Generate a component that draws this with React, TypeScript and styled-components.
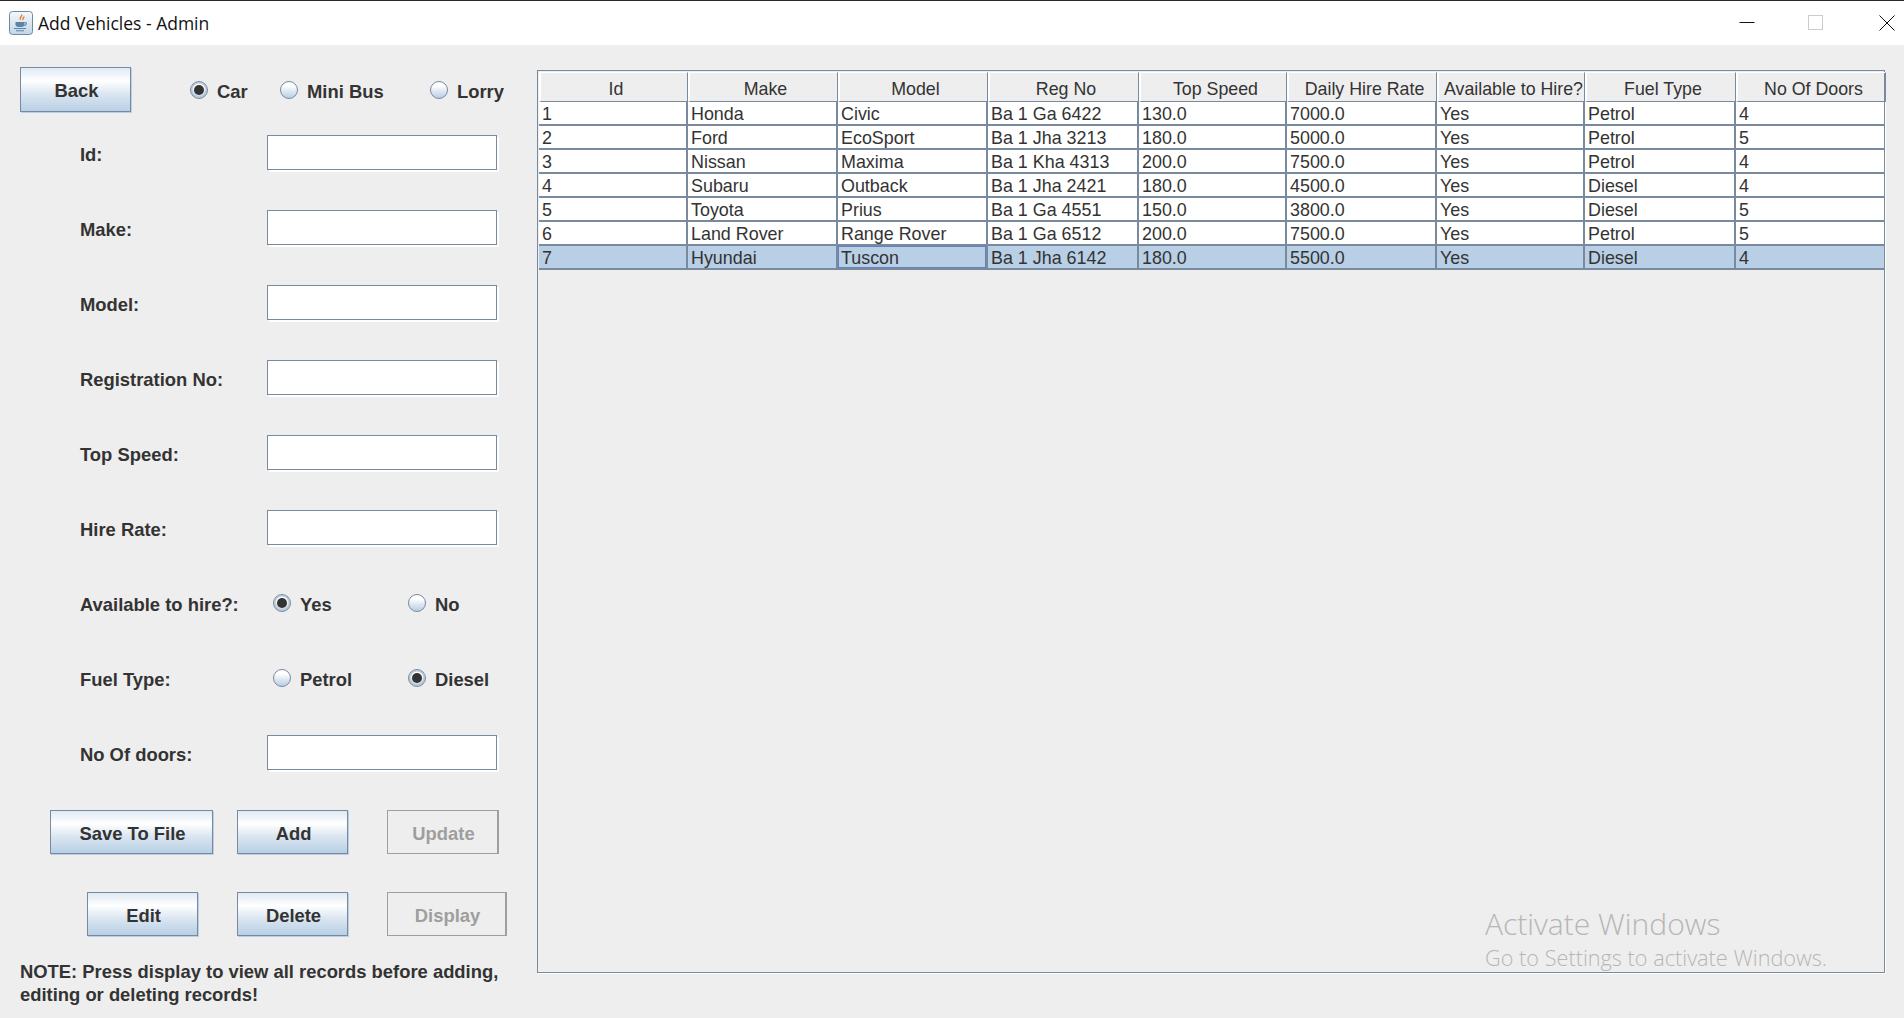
import React from "react";
import styled, { createGlobalStyle } from "styled-components";

const Global = createGlobalStyle`
  html, body { margin: 0; padding: 0; background: #eeeeee; }
  * { box-sizing: border-box; }
`;

const Window = styled.div`
  width: 1904px;
  height: 1018px;
  display: flex;
  flex-direction: column;
  background: #eeeeee;
  overflow: hidden;
  font-family: "Liberation Sans", Arial, sans-serif;
  color: #333333;
`;

const TitleBar = styled.header`
  height: 45px;
  flex: none;
  display: flex;
  align-items: center;
  background: #ffffff;
  border-top: 1px solid #2b2b2b;
  padding-left: 9px;
`;

const AppIcon = styled.svg`
  width: 24px;
  height: 24px;
  flex: none;
`;

const Title = styled.h1`
  margin: 0 0 0 5px;
  font: 400 17.5px "Open Sans", sans-serif;
  color: #111111;
  flex: 1;
`;

const WinButton = styled.svg<{ $gap: number }>`
  width: 16px;
  height: 16px;
  flex: none;
  margin-right: ${(p) => p.$gap}px;
`;

const Body = styled.main`
  flex: 1;
  display: flex;
  min-height: 0;
`;

const Side = styled.section`
  width: 537px;
  flex: none;
  display: flex;
  flex-direction: column;
  padding-top: 22px;
  font-weight: 700;
  font-size: 18.4px;
`;

const TopRow = styled.div`
  display: flex;
  align-items: center;
  height: 45px;
  padding-left: 20px;
`;

const Btn = styled.button<{ $w: number; $h?: number }>`
  width: ${(p) => p.$w}px;
  height: ${(p) => p.$h ?? 44}px;
  flex: none;
  padding: 3px 0 0 2px;
  border: 1px solid #7a8a9e;
  box-shadow: 1px 1px 0 #b8cfe5;
  background: linear-gradient(#dfe9f4 0%, #ffffff 30%, #dbe6f1 60%, #b8cfe5 100%);
  font: 700 18.4px "Liberation Sans", Arial, sans-serif;
  color: #333333;
  &:disabled {
    background: transparent;
    border-color: #9e9e9e;
    box-shadow: 1px 0 0 #9e9e9e;
    color: #9e9e9e;
  }
`;

const Form = styled.div`
  display: flex;
  flex-direction: column;
  gap: 40px;
  margin-top: 23px;
  padding-left: 80px;
`;

const FormRow = styled.div`
  display: flex;
  align-items: center;
  height: 35px;
`;

const Label = styled.label`
  width: 187px;
  flex: none;
  padding-top: 4px;
`;

const Field = styled.input`
  width: 230px;
  height: 35px;
  padding: 0;
  border: 1px solid #7a8a9e;
  background: #ffffff;
  box-shadow: 2px 2px 0 #ffffff;
  outline: none;
`;

const RadioOption = styled.span<{ $w: number; $ml?: number }>`
  display: inline-flex;
  align-items: center;
  gap: 9px;
  width: ${(p) => p.$w}px;
  margin-left: ${(p) => p.$ml ?? 0}px;
  flex: none;
`;

const RadioText = styled.span`
  padding-top: 4px;
`;

const RadioMark = styled.i<{ $on?: boolean }>`
  position: relative;
  display: block;
  width: 18px;
  height: 18px;
  flex: none;
  border-radius: 50%;
  border: 1px solid #7a8a9e;
  background: linear-gradient(#ffffff 25%, #dbe6f1 60%, #b8cfe5 100%);
  box-shadow: ${(p) => (p.$on ? "inset 0 0 0 1.5px #b8c8d8" : "none")};
  &::after {
    content: "";
    display: ${(p) => (p.$on ? "block" : "none")};
    position: absolute;
    left: 3px;
    top: 3px;
    width: 10px;
    height: 10px;
    border-radius: 50%;
    background: #333333;
  }
`;

const Actions = styled.div<{ $pl: number; $mt: number }>`
  display: flex;
  padding-left: ${(p) => p.$pl}px;
  margin-top: ${(p) => p.$mt}px;
`;

const ActionSlot = styled.span<{ $ml?: number }>`
  margin-left: ${(p) => p.$ml ?? 0}px;
  display: flex;
`;

const Note = styled.p`
  margin: 24px 0 0 20px;
  line-height: 23px;
  width: 500px;
`;

const TablePanel = styled.section`
  position: relative;
  width: 1348px;
  height: 903px;
  margin-top: 25px;
  border: 1px solid #7a8a9e;
  box-shadow: 1px 1px 0 #ffffff;
  padding: 1px 0 0 1px;
`;

const COLS = "149px 150px 150px 151px 148px 150px 148px 151px 150px";

const HeaderRow = styled.div`
  display: grid;
  grid-template-columns: ${COLS};
  height: 30px;
`;

const HeaderCell = styled.div`
  display: flex;
  align-items: center;
  justify-content: center;
  padding: 4px 0 0 4px;
  border-top: 1px solid #ffffff;
  border-left: 2px solid #ffffff;
  border-right: 1px solid #7a8a9e;
  border-bottom: 1px solid #7a8a9e;
  font-size: 17.8px;
  white-space: nowrap;
  overflow: hidden;
`;

const DataRow = styled.div<{ $sel?: boolean }>`
  display: grid;
  grid-template-columns: ${COLS};
  height: 24px;
  background: ${(p) => (p.$sel ? "#b8cfe5" : "#ffffff")};
  border-bottom: 2px solid #7a8a9e;
`;

const Cell = styled.div<{ $focus?: boolean }>`
  display: flex;
  align-items: center;
  padding: 3px 0 0 3px;
  border-right: 2px solid #7a8a9e;
  font-size: 17.9px;
  white-space: nowrap;
  overflow: hidden;
  box-shadow: ${(p) => (p.$focus ? "inset 0 0 0 1px #6382bf" : "none")};
  &:last-child { border-right: none; }
`;

const Watermark = styled.div`
  position: absolute;
  left: 947px;
  bottom: 0;
  font-family: "Open Sans", sans-serif;
  font-weight: 300;
  color: #b6b6b6;
  pointer-events: none;
`;

const WatermarkTitle = styled.div`
  font-size: 30px;
  line-height: 40px;
  white-space: nowrap;
`;

const WatermarkSub = styled.div`
  font-size: 21.7px;
  line-height: 28px;
  white-space: nowrap;
`;

const heads = ["Id", "Make", "Model", "Reg No", "Top Speed", "Daily Hire Rate", "Available to Hire?", "Fuel Type", "No Of Doors"];
const rows = [
  ["1", "Honda", "Civic", "Ba 1 Ga 6422", "130.0", "7000.0", "Yes", "Petrol", "4"],
  ["2", "Ford", "EcoSport", "Ba 1 Jha 3213", "180.0", "5000.0", "Yes", "Petrol", "5"],
  ["3", "Nissan", "Maxima", "Ba 1 Kha 4313", "200.0", "7500.0", "Yes", "Petrol", "4"],
  ["4", "Subaru", "Outback", "Ba 1 Jha 2421", "180.0", "4500.0", "Yes", "Diesel", "4"],
  ["5", "Toyota", "Prius", "Ba 1 Ga 4551", "150.0", "3800.0", "Yes", "Diesel", "5"],
  ["6", "Land Rover", "Range Rover", "Ba 1 Ga 6512", "200.0", "7500.0", "Yes", "Petrol", "5"],
  ["7", "Hyundai", "Tuscon", "Ba 1 Jha 6142", "180.0", "5500.0", "Yes", "Diesel", "4"],
];
const fields = ["Id:", "Make:", "Model:", "Registration No:", "Top Speed:", "Hire Rate:"];

const Radio = ({ text, on, w, ml }: { text: string; on?: boolean; w: number; ml?: number }) => (
  <RadioOption $w={w} $ml={ml}>
    <RadioMark $on={on} />
    <RadioText>{text}</RadioText>
  </RadioOption>
);

export default function App() {
  return (
    <Window>
      <Global />
      <TitleBar>
        <AppIcon viewBox="0 0 24 24">
          <defs>
            <linearGradient id="ic" x1="0" y1="0" x2="0" y2="1">
              <stop offset="0" stopColor="#f4f8fb" />
              <stop offset="1" stopColor="#c3d6e6" />
            </linearGradient>
          </defs>
          <rect x="0.5" y="0.5" width="23" height="23" rx="3" fill="url(#ic)" stroke="#6d8aa3" />
          <path d="M12.5 3.5c1.5 1.6-2.6 3 -1.2 5.4M14.8 5.5c.6 1.2-1.6 2-1 3.6" fill="none" stroke="#e8792b" strokeWidth="1.4" />
          <path d="M6.5 11h9v2.6c0 1.5-1.2 2.4-2.6 2.4H9.1c-1.4 0-2.6-.9-2.6-2.4z" fill="#5b84a8" />
          <path d="M15.5 11.5c2.6-.4 2.6 2.6-.3 3M5 17.5h12M7 19.8h8" fill="none" stroke="#5b84a8" strokeWidth="1.1" />
        </AppIcon>
        <Title>Add Vehicles - Admin</Title>
        <WinButton $gap={53} viewBox="0 0 16 16">
          <path d="M0.5 7.5H15.5" stroke="#111" strokeWidth="1" />
        </WinButton>
        <WinButton $gap={55} viewBox="0 0 16 16">
          <rect x="0.5" y="0.5" width="14" height="14" fill="none" stroke="#cccccc" />
        </WinButton>
        <WinButton $gap={9} viewBox="0 0 16 16">
          <path d="M0.5 0.5L15.5 15.5M15.5 0.5L0.5 15.5" stroke="#111" strokeWidth="1" />
        </WinButton>
      </TitleBar>
      <Body>
        <Side>
          <TopRow>
            <Btn $w={111} $h={45}>Back</Btn>
            <Radio text="Car" on w={90} ml={59} />
            <Radio text="Mini Bus" w={150} />
            <Radio text="Lorry" w={90} />
          </TopRow>
          <Form>
            {fields.map((f) => (
              <FormRow key={f}>
                <Label>{f}</Label>
                <Field />
              </FormRow>
            ))}
            <FormRow>
              <Label>Available to hire?:</Label>
              <Radio text="Yes" on w={135} ml={6} />
              <Radio text="No" w={80} />
            </FormRow>
            <FormRow>
              <Label>Fuel Type:</Label>
              <Radio text="Petrol" w={135} ml={6} />
              <Radio text="Diesel" on w={90} />
            </FormRow>
            <FormRow>
              <Label>No Of doors:</Label>
              <Field />
            </FormRow>
          </Form>
          <Actions $pl={50} $mt={40}>
            <Btn $w={163}>Save To File</Btn>
            <ActionSlot $ml={24}><Btn $w={111}>Add</Btn></ActionSlot>
            <ActionSlot $ml={39}><Btn $w={111} disabled>Update</Btn></ActionSlot>
          </Actions>
          <Actions $pl={87} $mt={38}>
            <Btn $w={111}>Edit</Btn>
            <ActionSlot $ml={39}><Btn $w={111}>Delete</Btn></ActionSlot>
            <ActionSlot $ml={39}><Btn $w={119} disabled>Display</Btn></ActionSlot>
          </Actions>
          <Note>NOTE: Press display to view all records before adding, editing or deleting records!</Note>
        </Side>
        <TablePanel>
          <HeaderRow>
            {heads.map((h) => (
              <HeaderCell key={h}>{h}</HeaderCell>
            ))}
          </HeaderRow>
          {rows.map((r, i) => (
            <DataRow key={r[0]} $sel={i === 6}>
              {r.map((c, j) => (
                <Cell key={j} $focus={i === 6 && j === 2}>{c}</Cell>
              ))}
            </DataRow>
          ))}
          <Watermark>
            <WatermarkTitle>Activate Windows</WatermarkTitle>
            <WatermarkSub>Go to Settings to activate Windows.</WatermarkSub>
          </Watermark>
        </TablePanel>
      </Body>
    </Window>
  );
}
